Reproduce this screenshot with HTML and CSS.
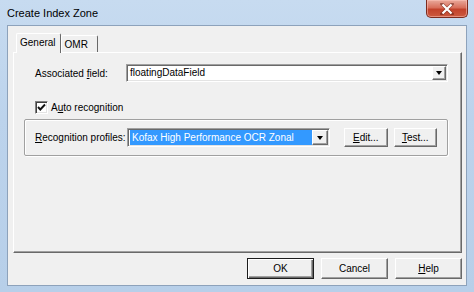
FILE: index.html
```html
<!DOCTYPE html>
<html lang="en">
<head>
  <meta charset="UTF-8" />
  <title>Create Index Zone</title>
  <link rel="stylesheet" href="styles.css">
</head>
<body>
  <div class="window">
    <div class="titlebar">
      <span class="title">Create Index Zone</span>
      <button class="close" title="Close">
        <svg width="14" height="12" viewBox="0 0 14 12">
          <path d="M2 1 L12 11 M12 1 L2 11" stroke="#5a1a10" stroke-width="3.4" stroke-linecap="square" opacity="0.5" />
          <path d="M2.5 1.5 L11.5 10.5 M11.5 1.5 L2.5 10.5" stroke="#ffffff" stroke-width="2.2" />
        </svg>
      </button>
    </div>

    <div class="client">
      <div class="tabs">
        <span class="tab active">General</span>
        <span class="tab">OMR</span>
      </div>

      <div class="panel">
        <div class="field-row">
          <span class="label">Associated <u>f</u>ield:</span>
          <div class="combo">
            <span class="combo-text">floatingDataField</span>
            <span class="drop"><i class="arrow"></i></span>
          </div>
        </div>

        <label class="check-row">
          <span class="checkbox">
            <svg width="9" height="9" viewBox="0 0 9 9">
              <path d="M1 4 L3.3 6.5 L8 1.5" stroke="#111" stroke-width="1.9" fill="none" />
            </svg>
          </span>
          <span>A<u>u</u>to recognition</span>
        </label>

        <div class="group">
          <span class="label wide"><u>R</u>ecognition profiles:</span>
          <div class="combo small">
            <span class="combo-text selected">Kofax High Performance OCR Zonal</span>
            <span class="drop"><i class="arrow"></i></span>
          </div>
          <button class="btn edit"><u>E</u>dit...</button>
          <button class="btn"><u>T</u>est...</button>
        </div>
      </div>

      <div class="footer">
        <button class="btn big default">OK</button>
        <button class="btn big">Cancel</button>
        <button class="btn big"><u>H</u>elp</button>
      </div>
    </div>
  </div>
</body>
</html>
```

FILE: styles.css
```css
body {
  margin: 0;
  width: 474px;
  height: 292px;
  overflow: hidden;
  background: #b9d1ea;
  font-family: "Liberation Sans", Arial, sans-serif;
  font-size: 10px;
  color: #000;
}
.window {
  height: 292px;
  box-sizing: border-box;
  padding: 0 7px 6px 7px;
  display: flex;
  flex-direction: column;
  background: linear-gradient(to bottom, #c7dbf0 0%, #bcd3ec 40%, #b7cfe9 100%);
}
.titlebar {
  height: 25px;
  display: flex;
  align-items: flex-start;
}
.title {
  font-size: 11px;
  padding-top: 7px;
  color: #000;
}
.close {
  margin-left: auto;
  margin-right: -1px;
  width: 42px;
  height: 18px;
  padding: 0;
  border: 1px solid #7c2b1e;
  border-top: none;
  border-radius: 0 0 5px 5px;
  background: linear-gradient(to bottom, #e9a99b 0%, #d86f5b 45%, #c2422b 55%, #cc5a3f 100%);
  box-shadow: inset 0 0 0 1px rgba(255, 200, 190, 0.5);
  display: flex;
  align-items: center;
  justify-content: center;
}
.client {
  flex: 1;
  display: flex;
  flex-direction: column;
  background: #f0f0f0;
  border: 1px solid #8da2bb;
  padding: 6px 4px 0 5px;
}

/* tabs */
.tabs {
  height: 20px;
  display: flex;
  align-items: flex-end;
  padding-left: 3px;
}
.tab {
  height: 16px;
  padding: 0 9px 0 3px;
  line-height: 17px;
  white-space: nowrap;
  border-top: 1px solid #fff;
  border-left: 1px solid #fff;
  border-right: 1px solid #696969;
  border-radius: 2px 2px 0 0;
}
.tab.active {
  height: 19px;
  line-height: 18px;
  padding: 0 4px 0 3px;
  position: relative;
  z-index: 1;
  background: #f0f0f0;
  margin-bottom: -1px;
}
.panel {
  height: 201px;
  box-sizing: border-box;
  border-top: 1px solid #fff;
  border-left: 1px solid #fff;
  border-right: 1px solid #696969;
  border-bottom: 1px solid #696969;
  box-shadow: inset -1px -1px #a0a0a0;
  padding: 11px 13px 0 10px;
}

.field-row {
  display: flex;
  align-items: center;
  padding-left: 11px;
}
.label {
  width: 91px;
  flex: none;
  white-space: nowrap;
}
.label.wide {
  width: 92px;
}

/* sunken combo box */
.combo {
  flex: 1;
  height: 18px;
  box-sizing: border-box;
  display: flex;
  align-items: center;
  background: #fff;
  border: 1px solid;
  border-color: #a0a0a0 #fff #fff #a0a0a0;
  box-shadow: inset 1px 1px #696969, inset -1px -1px #e3e3e3;
  padding: 1px 1px 1px 2px;
}
.combo.small {
  flex: none;
  width: 203px;
  height: 19px;
}
.combo-text {
  flex: 1;
  height: 14px;
  line-height: 14px;
  padding-left: 1px;
  white-space: nowrap;
  overflow: hidden;
}
.combo-text.selected {
  background: #3399ff;
  color: #fff;
  height: 15px;
  line-height: 15px;
  padding-left: 2px;
}
.drop {
  width: 14px;
  height: 14px;
  box-sizing: border-box;
  flex: none;
  background: #f0f0f0;
  border: 1px solid;
  border-color: #fff #696969 #696969 #fff;
  box-shadow: inset -1px -1px #a0a0a0;
  display: flex;
  align-items: center;
  justify-content: center;
}
.combo.small .drop {
  width: 16px;
  height: 15px;
}
.arrow {
  width: 0;
  height: 0;
  border-left: 3px solid transparent;
  border-right: 3px solid transparent;
  border-top: 4px solid #000;
}

/* checkbox */
.check-row {
  display: flex;
  align-items: center;
  gap: 3px;
  margin-top: 19px;
  padding-left: 11px;
}
.checkbox {
  width: 13px;
  height: 13px;
  box-sizing: border-box;
  border: 1px solid;
  border-color: #808080 #fff #fff #808080;
  box-shadow: inset 1px 1px #404040, inset -1px -1px #e3e3e3;
  background: #fff;
  display: flex;
  align-items: center;
  justify-content: center;
}

/* group box */
.group {
  margin-top: 5px;
  display: flex;
  align-items: center;
  padding: 8px 10px;
  border: 1px solid #a0a0a0;
  border-radius: 2px;
  box-shadow: inset 1px 1px #fff, 1px 1px #fff;
}

/* buttons */
.btn {
  font-family: "Liberation Sans", Arial, sans-serif;
  font-size: 10px;
  color: #000;
  width: 44px;
  height: 19px;
  padding: 0;
  background: #f0f0f0;
  border: 1px solid;
  border-color: #fff #696969 #696969 #fff;
  box-shadow: inset -1px -1px #a0a0a0;
  margin-left: 6px;
}
.btn.edit {
  margin-left: 14px;
}
.footer {
  flex: 1;
  display: flex;
  justify-content: flex-end;
  align-items: flex-start;
  padding-top: 5px;
  gap: 7px;
}
.btn.big {
  width: 67px;
  height: 21px;
  margin-left: 0;
}
.btn.default {
  border-color: #1c1c1c;
  box-shadow: inset 1px 1px #fff, inset -1px -1px #696969, inset -2px -2px #a0a0a0;
}
```
